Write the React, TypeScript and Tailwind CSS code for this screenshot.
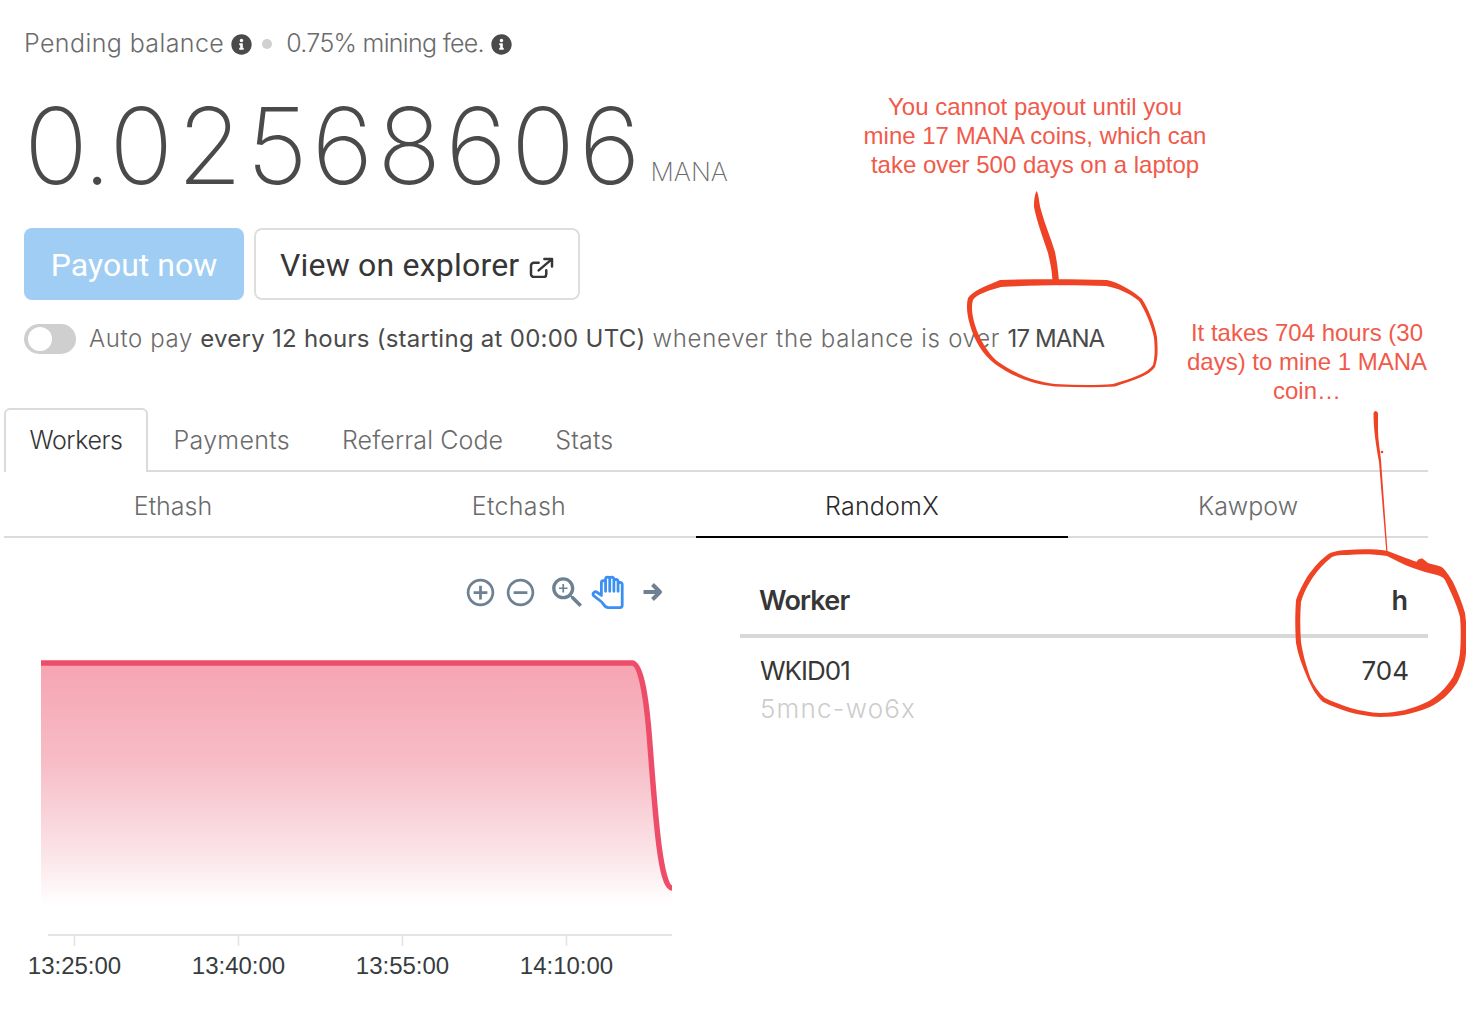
import React from "react";
import { FaInfoCircle } from "react-icons/fa";

const poppins = { fontFamily: '"Inter", "Noto Sans", sans-serif' };

function Info() {
  return <FaInfoCircle className="text-[#4a4a4a] w-[21px] h-[21px]" />;
}

function Toolbar() {
  return (
    <div className="flex items-center h-[40px] pl-[464px] text-[#6e8192]">
      <svg viewBox="0 0 24 24" className="w-[33px] h-[33px] shrink-0" fill="currentColor">
        <path d="M13 7h-2v4H7v2h4v4h2v-4h4v-2h-4V7zm-1-5C6.48 2 2 6.48 2 12s4.48 10 10 10 10-4.48 10-10S17.52 2 12 2zm0 18c-4.41 0-8-3.59-8-8s3.59-8 8-8 8 3.59 8 8-3.59 8-8 8z" />
      </svg>
      <svg viewBox="0 0 24 24" className="w-[33px] h-[33px] ml-[7px] shrink-0" fill="currentColor">
        <path d="M7 11v2h10v-2H7zm5-9C6.48 2 2 6.48 2 12s4.48 10 10 10 10-4.48 10-10S17.52 2 12 2zm0 18c-4.41 0-8-3.59-8-8s3.59-8 8-8 8 3.59 8 8-3.59 8-8 8z" />
      </svg>
      <svg viewBox="0 0 24 24" className="w-[41px] h-[41px] ml-[10px] shrink-0" fill="currentColor">
        <path d="M15.5 14h-.79l-.28-.27C15.41 12.59 16 11.11 16 9.5 16 5.91 13.09 3 9.5 3S3 5.91 3 9.5 5.91 16 9.5 16c1.61 0 3.09-.59 4.23-1.57l.27.28v.79l5 4.99L20.49 19l-4.99-5zm-6 0C7.01 14 5 11.99 5 9.5S7.01 5 9.5 5 14 7.01 14 9.5 11.99 14 9.5 14z" />
        <path d="M12 10h-2v2H9v-2H7V9h2V7h1v2h2v1z" />
      </svg>
      <svg viewBox="0 0 32 32" className="w-[37px] h-[37px] ml-[3px] shrink-0" fill="none" stroke="#3b8ff3" strokeWidth="2.4" strokeLinejoin="round" strokeLinecap="round">
        <path d="M9 17V7.5a1.8 1.8 0 0 1 3.6 0V15M12.6 15V4.5a1.8 1.8 0 0 1 3.6 0V15M16.2 15V4.5a1.8 1.8 0 0 1 3.6 0V15M19.8 15V6.5a1.8 1.8 0 0 1 3.6 0V15M23.4 9a1.8 1.8 0 0 1 3.6 0V27a2 2 0 0 1-2 2H15c-2 0-3-1-4-2.5L9 24 2.5 19a2 2 0 0 1 3-3L9 18.5" />
      </svg>
      <svg viewBox="0 0 20 20" className="w-[20px] h-[20px] ml-[15px] shrink-0" fill="none" stroke="currentColor" strokeWidth="4" strokeLinejoin="round">
        <path d="M0.5 10H16M9.5 2.5L17 10L9.5 17.5" />
      </svg>
    </div>
  );
}

function Chart() {
  return (
    <svg viewBox="0 640 692 360" className="block w-[692px] h-[360px] mt-[28px]">
      <defs>
        <linearGradient id="area" x1="0" y1="0" x2="0" y2="1">
          <stop offset="0" stopColor="#f6a4b2" />
          <stop offset="0.4" stopColor="#f7bcc6" />
          <stop offset="0.75" stopColor="#fae0e5" />
          <stop offset="1" stopColor="#ffffff" />
        </linearGradient>
      </defs>
      <path d="M41 663H632C640 663 646 690 650 745C655 810 660 888 672 888V906H41Z" fill="url(#area)" />
      <path d="M41 663H632C640 663 646 690 650 745C655 810 660 888 672 888" fill="none" stroke="#ee4d6a" strokeWidth="5.5" />
      <path d="M48 935H672" stroke="#e4e4e4" strokeWidth="2" />
      {[74.5, 238.5, 402.5, 566.5].map((x) => (
        <path key={x} d={`M${x} 935V946`} stroke="#e4e4e4" strokeWidth="1.6" />
      ))}
      {[
        [74.5, "13:25:00"],
        [238.5, "13:40:00"],
        [402.5, "13:55:00"],
        [566.5, "14:10:00"],
      ].map(([x, t]) => (
        <text key={t as string} x={x as number} y="974" textAnchor="middle" fontSize="24" fill="#373d3f" fontFamily="Liberation Sans">
          {t}
        </text>
      ))}
    </svg>
  );
}

function Annotations() {
  return (
    <>
      <svg viewBox="0 0 1466 1018" className="absolute inset-0 w-[1466px] h-[1018px] pointer-events-none" fill="#ee4425" fillRule="evenodd">
        <path d="M1036.7 191C1034 195 1034 205 1034 207C1037 222 1043 238 1048 253C1050 262 1052 270 1052.5 281L1059 281C1058 270 1057 262 1055 252C1051 238 1045 225 1041 210C1039 203 1039 195 1036.7 191Z" />
        <path d="M1000 280C1035 279 1075 279 1107 280C1120 283 1133 291 1142 299C1148 308 1155 325 1157 337C1158 350 1158 358 1155 367C1150 375 1135 380 1115 386.5C1095 388 1075 387 1055 386.5C1030 384 1010 375 995 364C983 355 974 340 970 325C967 315 966 305 968 298C972 291 988 285 1000 280ZM1001 287C990 290 977 294 973 300C971 307 972 315 975 325C979 338 987 352 997 361C1012 372 1032 381 1055 384C1075 385 1095 385.5 1113 384C1133 378 1148 373 1153 365C1155 357 1155 349 1154 338C1152 326 1145 310 1139 301C1131 294 1118 288 1106 286C1075 285 1035 285 1001 287Z" />
        <path d="M1373.5 413Q1375.5 409 1378 413L1378 430C1378 440 1380 450 1381 460L1387.6 553L1386.4 553L1379 462C1376 445 1373.5 430 1373.5 413Z" />
        <circle cx="1382" cy="452" r="1.3" />
        <path d="M1346.7 550C1360 549 1375 549 1386.7 550.7C1396 554 1408 559 1416.7 561.7C1418 559 1421 558 1422.7 558.7L1428 563C1434 565 1439 565 1443 568C1447 572 1450 577 1453 582C1458 592 1462 603 1465 613C1467 628 1467 640 1466 653C1465 665 1461 675 1457 683C1449 695 1440 702 1430 707C1413 714 1397 717 1380 717C1358 716 1340 710 1323 702C1316 696 1311 686 1307 677C1302 665 1298 655 1296 643C1295 628 1295 615 1296 600C1299 591 1303 584 1307 577C1314 567 1321 559 1330 553C1336 551 1341 550 1346.7 550ZM1347 555C1341 555 1337 555 1332 557C1324 563 1316 572 1310 582C1306 588 1303 595 1301 602C1300 615 1300 628 1301 642C1303 655 1306 665 1310 677C1314 686 1319 693 1325 698C1342 706 1360 712 1380 713C1397 713 1412 709 1427 702C1437 697 1446 688 1453 677C1456 670 1459 662 1460 653C1461 640 1461 628 1460 617C1457 605 1451 592 1445 580C1443 577 1440 576 1437 575C1429 573 1421 571 1413 568C1404 565 1396 560 1387 556C1374 554 1360 554 1347 555Z" />
      </svg>
      <div className="absolute left-[835px] top-[92px] w-[400px] text-center text-[24px] leading-[29px] text-[#f15a4a]" style={{ fontFamily: '"Liberation Sans", sans-serif' }}>
        You cannot payout until you
        <br />
        mine 17 MANA coins, which can
        <br />
        take over 500 days on a laptop
      </div>
      <div className="absolute left-[1157px] top-[318px] w-[300px] text-center text-[24px] leading-[29px] text-[#f15a4a]" style={{ fontFamily: '"Liberation Sans", sans-serif' }}>
        It takes 704 hours (30
        <br />
        days) to mine 1 MANA
        <br />
        coin…
      </div>
    </>
  );
}

export default function App() {
  return (
    <div className="relative w-[1466px] h-[1018px] overflow-hidden bg-white pt-[26px] text-[#4a4a4a]" style={poppins}>
      <div className="flex items-center h-[36px] pl-6">
        <span className="text-[25px] font-light text-[#6b6b6b] tracking-[0.4px]">Pending balance</span>
        <span className="ml-[7px]"><Info /></span>
        <span className="ml-[10px] w-[10px] h-[10px] rounded-full bg-[#d0d0d0]" />
        <span className="ml-[14px] text-[25px] font-light text-[#6b6b6b] tracking-[-0.7px]">0.75% mining fee.</span>
        <span className="ml-[7px]"><Info /></span>
      </div>

      <div className="flex items-baseline h-[120px] mt-[24px] pl-[24px]">
        <span className="text-[106px] leading-[120px] font-[250] text-[#4a4a4a] tracking-[3.9px]">
          <span className="tracking-[-2.75px]">0.</span>02568606
        </span>
        <span className="ml-[6px] text-[26px] font-extralight text-[#6b6b6b] -translate-y-[3px]">MANA</span>
      </div>

      <div className="flex gap-[10px] pl-6 mt-[22px] h-[72px]" style={{ fontFamily: "Roboto, sans-serif" }}>
        <button className="w-[220px] rounded-[8px] bg-[#9fcdf4] text-white text-[32px] pt-[2px]">Payout now</button>
        <button className="w-[326px] rounded-[8px] border-2 border-[#dedede] bg-white text-[#363636] text-[32px] tracking-[0.2px] flex items-center pl-[24px] pt-[2px]">
          View on explorer
          <svg viewBox="0 0 26 22" className="w-[25px] h-[21px] ml-[10px] mt-[4px]" fill="none" stroke="#363636" strokeWidth="2.6" strokeLinecap="round" strokeLinejoin="round">
            <path d="M18 14v4a3 3 0 0 1-3 3H5a3 3 0 0 1-3-3V9a3 3 0 0 1 3-3h5" />
            <path d="M10 14L23 3M16 2h8v8" />
          </svg>
        </button>
      </div>

      <div className="flex items-center h-[30px] mt-[24px] pl-6 whitespace-nowrap text-[24px]">
        <span className="relative w-[52px] h-[30px] rounded-full bg-[#cfcfcf] mr-[13px] shrink-0">
          <span className="absolute left-[4px] top-[3px] w-[24px] h-[24px] rounded-full bg-white" />
        </span>
        <span className="font-light text-[#6b6b6b] tracking-[0.6px]">Auto pay&nbsp;</span>
        <span className="font-normal text-[#4a4a4a] tracking-[0.26px]">every 12 hours (starting at 00:00 UTC)&nbsp;</span>
        <span className="font-light text-[#6b6b6b] tracking-[0.7px]">whenever the balance is over&nbsp;</span>
        <span className="font-normal text-[#4a4a4a] tracking-[-0.9px]">17 MANA</span>
      </div>

      <div className="ml-1 w-[1424px] mt-[54px] h-[64px] flex border-b-2 border-[#dbdbdb] text-[25px] font-light text-[#6b6b6b]">
        <div className="w-[144px] h-[64px] flex items-center justify-center border-2 border-b-0 border-[#dbdbdb] rounded-t-[6px] bg-white text-[#363636] tracking-[-0.4px]">Workers</div>
        <div className="pl-[25.5px] pr-[26px] pt-[3px] flex items-center tracking-[0.3px]">Payments</div>
        <div className="px-[26px] pt-[3px] flex items-center tracking-[0.1px]">Referral Code</div>
        <div className="px-[26px] pt-[3px] flex items-center tracking-[0.2px]">Stats</div>
      </div>

      <div className="ml-1 w-[1424px] h-[66px] flex border-b-2 border-[#dbdbdb] text-[25px] font-light text-[#6b6b6b]">
        <div className="w-[338px] pt-[5px] flex items-center justify-center">Ethash</div>
        <div className="w-[354px] pt-[5px] flex items-center justify-center tracking-[0.3px]">Etchash</div>
        <div className="w-[372px] h-[66px] pt-[5px] flex items-center justify-center border-b-2 border-black text-[#2a2a2a] tracking-[0.2px]">RandomX</div>
        <div className="w-[360px] pt-[5px] flex items-center justify-center">Kawpow</div>
      </div>

      <div className="flex">
        <div className="w-[740px] shrink-0 pt-[34px]">
          <Toolbar />
          <Chart />
        </div>
        <div className="w-[688px]">
          <div className="h-[100px] flex items-end justify-between pl-[19px] pr-5 border-b-4 border-[#d8d8d8] font-semibold text-[27px] text-[#363636] pb-[13px]">
            <span className="tracking-[-0.8px]">Worker</span>
            <span>h</span>
          </div>
          <div className="flex justify-between pl-5 pr-[19px] pt-[14px] text-[26px] font-light">
            <div>
              <div className="text-[#363636] leading-[38px] font-normal tracking-[-1px]">WKID01</div>
              <div className="text-[#cccccc] leading-[38px] tracking-[1.2px]">5mnc-wo6x</div>
            </div>
            <div className="text-[#363636] leading-[38px] font-normal">704</div>
          </div>
        </div>
      </div>

      <Annotations />
    </div>
  );
}
